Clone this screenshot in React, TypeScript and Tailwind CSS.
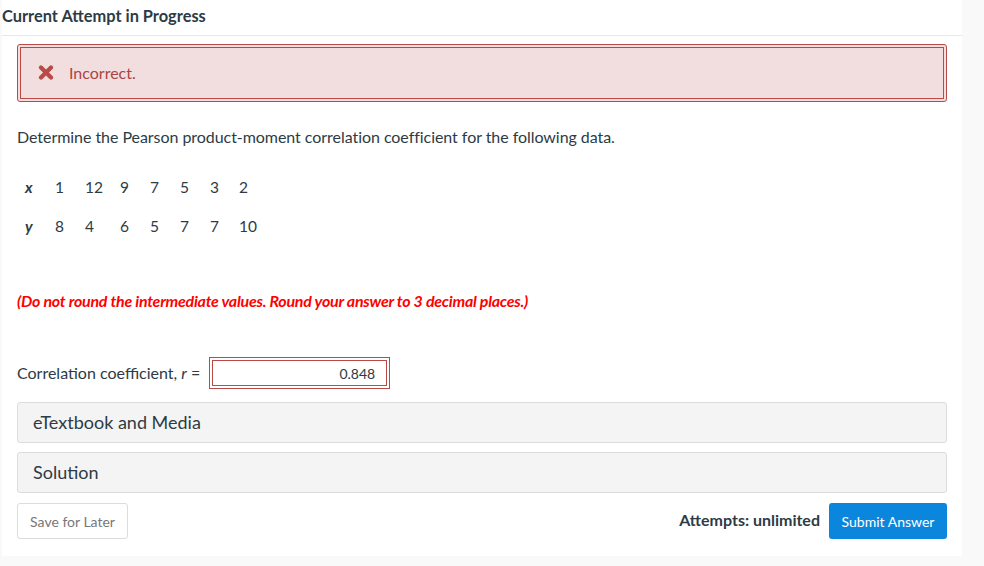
import React from "react";

const xs = ["1", "12", "9", "7", "5", "3", "2"];
const ys = ["8", "4", "6", "5", "7", "7", "10"];
const widths = ["w-[30px]", "w-[35px]", "w-[30px]", "w-[30px]", "w-[30px]", "w-[29px]", "w-[30px]"];

function Row({ label, vals }: { label: string; vals: string[] }) {
  return (
    <div className="h-[39px] flex items-center text-[15.5px]">
      <span className="w-[38px] pl-[8px] font-bold italic">{label}</span>
      {vals.map((v, i) => (
        <span key={i} className={widths[i]}>{v}</span>
      ))}
    </div>
  );
}

export default function App() {
  return (
    <div className="min-h-[566px] w-[984px] bg-[#f9f9f9] pl-[2px] text-[#2d3b45]" style={{ fontFamily: "Lato, 'Open Sans', sans-serif" }}>
      <div className="w-[960px] h-[556px] bg-white">
        <div className="h-[36px] border-b border-[#e8e8e8] flex items-center pb-[3px]">
          <h1 className="text-[16.4px] font-bold">Current Attempt in Progress</h1>
        </div>
        <div className="px-[15px]">
          <div className="mt-[8px] rounded-[3px] border border-[#b94a48] bg-[#f2dede] p-[2px]">
            <div className="h-[52px] border border-[#b94a48] flex items-center pl-[17px]">
              <svg width="16" height="15" viewBox="0 0 16 15" className="mr-[15px] -mt-[1px]">
                <path d="M3 2.5 L13 12.5 M13 2.5 L3 12.5" stroke="#b94a48" strokeWidth="4.2" strokeLinecap="round" />
              </svg>
              <span className="text-[16px] text-[#a94442]">Incorrect.</span>
            </div>
          </div>

          <p className="mt-[24px] text-[16px] leading-[22px] tracking-[-0.05px]">
            Determine the Pearson product-moment correlation coefficient for the following data.
          </p>

          <div className="mt-[20px]">
            <Row label="x" vals={xs} />
            <Row label="y" vals={ys} />
          </div>

          <p className="mt-[44px] text-[16px] leading-[22px] font-bold italic text-[#ff0000] tracking-[-0.25px]">
            (Do not round the intermediate values. Round your answer to 3 decimal places.)
          </p>

          <div className="mt-[45px] flex items-center">
            <span className="text-[16px]">
              Correlation coefficient, <i>r</i> =
            </span>
            <div className="ml-[9px] w-[181px] h-[32px] border border-[#b94a48] p-[2px]">
              <div className="h-full border border-[#b94a48] flex items-center justify-end pr-[11px] text-[14px]">
                0.848
              </div>
            </div>
          </div>

          <div className="mt-[13px] h-[41px] rounded-[3px] border border-[#dcdcdc] bg-[#f4f4f4] flex items-center pl-[15px] text-[18px]">
            eTextbook and Media
          </div>
          <div className="mt-[9px] h-[41px] rounded-[3px] border border-[#dcdcdc] bg-[#f4f4f4] flex items-center pl-[15px] text-[18px]">
            Solution
          </div>

          <div className="mt-[10px] flex items-center justify-between">
            <button className="h-[36px] w-[111px] rounded-[3px] border border-[#dcdcdc] bg-white text-[14px] text-[#777]">
              Save for Later
            </button>
            <div className="flex items-center">
              <span className="text-[16px] font-bold mr-[9px] -mt-[3px]">Attempts: unlimited</span>
              <button className="h-[36px] w-[118px] rounded-[3px] bg-[#0a87dc] text-white text-[14px]">
                Submit Answer
              </button>
            </div>
          </div>
        </div>
      </div>
    </div>
  );
}
